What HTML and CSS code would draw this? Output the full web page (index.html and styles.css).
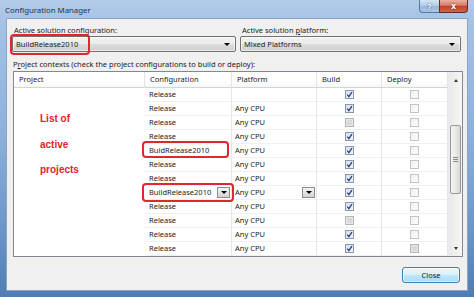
FILE: index.html
```html
<!DOCTYPE html>
<html>
<head>
<meta charset="utf-8">
<link rel="stylesheet" href="styles.css">
</head>
<body>
<div class="window">
  <div class="titlebar">
    <span class="title">Configuration Manager</span>
    <div class="caption">
      <span class="cap-help">?</span>
      <span class="cap-close">x</span>
    </div>
  </div>
  <div class="client">
    <div class="top">
      <div class="field">
        <div class="label">Active solution configuration:</div>
        <div class="combo"><span>BuildRelease2010</span><i class="arrow"></i></div>
      </div>
      <div class="field">
        <div class="label">Active solution <u>p</u>latform:</div>
        <div class="combo"><span>Mixed Platforms</span><i class="arrow"></i></div>
      </div>
    </div>
    <div class="label ctx">P<u>r</u>oject contexts (check the project configurations to build or deploy):</div>
    <div class="list">
      <div class="grid">
        <div class="hd">Project</div>
        <div class="hd">Configuration</div>
        <div class="hd">Platform</div>
        <div class="hd">Build</div>
        <div class="hd">Deploy</div>
        <div class="proj"><p>List of</p><p>active</p><p>projects</p></div>

        <div class="c">Release</div><div class="c plat"></div>
        <div class="c chk"><span class="cb on"><svg viewBox="0 0 9 9"><path d="M2.2 4.6 L3.9 6.6 L6.9 2.1"/></svg></span></div><div class="c chk"><span class="cb"></span></div>

        <div class="c">Release</div><div class="c plat">Any CPU</div>
        <div class="c chk"><span class="cb on"><svg viewBox="0 0 9 9"><path d="M2.2 4.6 L3.9 6.6 L6.9 2.1"/></svg></span></div><div class="c chk"><span class="cb"></span></div>

        <div class="c">Release</div><div class="c plat">Any CPU</div>
        <div class="c chk"><span class="cb dis"></span></div><div class="c chk"><span class="cb"></span></div>

        <div class="c">Release</div><div class="c plat">Any CPU</div>
        <div class="c chk"><span class="cb on"><svg viewBox="0 0 9 9"><path d="M2.2 4.6 L3.9 6.6 L6.9 2.1"/></svg></span></div><div class="c chk"><span class="cb"></span></div>

        <div class="c">BuidRelease2010</div><div class="c plat">Any CPU</div>
        <div class="c chk"><span class="cb on"><svg viewBox="0 0 9 9"><path d="M2.2 4.6 L3.9 6.6 L6.9 2.1"/></svg></span></div><div class="c chk"><span class="cb"></span></div>

        <div class="c">Release</div><div class="c plat">Any CPU</div>
        <div class="c chk"><span class="cb on"><svg viewBox="0 0 9 9"><path d="M2.2 4.6 L3.9 6.6 L6.9 2.1"/></svg></span></div><div class="c chk"><span class="cb"></span></div>

        <div class="c">Release</div><div class="c plat">Any CPU</div>
        <div class="c chk"><span class="cb on"><svg viewBox="0 0 9 9"><path d="M2.2 4.6 L3.9 6.6 L6.9 2.1"/></svg></span></div><div class="c chk"><span class="cb"></span></div>

        <div class="c drop">BuildRelease2010<span class="dbtn"><i class="arrow"></i></span></div><div class="c plat drop">Any CPU<span class="dbtn"><i class="arrow"></i></span></div>
        <div class="c chk"><span class="cb on"><svg viewBox="0 0 9 9"><path d="M2.2 4.6 L3.9 6.6 L6.9 2.1"/></svg></span></div><div class="c chk"><span class="cb"></span></div>

        <div class="c">Release</div><div class="c plat">Any CPU</div>
        <div class="c chk"><span class="cb on"><svg viewBox="0 0 9 9"><path d="M2.2 4.6 L3.9 6.6 L6.9 2.1"/></svg></span></div><div class="c chk"><span class="cb"></span></div>

        <div class="c">Release</div><div class="c plat">Any CPU</div>
        <div class="c chk"><span class="cb dis"></span></div><div class="c chk"><span class="cb"></span></div>

        <div class="c">Release</div><div class="c plat">Any CPU</div>
        <div class="c chk"><span class="cb on"><svg viewBox="0 0 9 9"><path d="M2.2 4.6 L3.9 6.6 L6.9 2.1"/></svg></span></div><div class="c chk"><span class="cb"></span></div>

        <div class="c">Release</div><div class="c plat">Any CPU</div>
        <div class="c chk"><span class="cb on"><svg viewBox="0 0 9 9"><path d="M2.2 4.6 L3.9 6.6 L6.9 2.1"/></svg></span></div><div class="c chk"><span class="cb dis"></span></div>
      </div>
      <div class="vscroll">
        <div class="sbtn"><i class="up"></i></div>
        <div class="track"><div class="thumb"><b></b><b></b><b></b></div></div>
        <div class="sbtn"><i class="down"></i></div>
      </div>
    </div>
    <div class="footer">
      <button class="btn">Close</button>
    </div>
  </div>
  <div class="mark m1"></div>
  <div class="mark m2"></div>
  <div class="mark m3"></div>
</div>
</body>
</html>
```

FILE: styles.css
```css
* { box-sizing: border-box; margin: 0; padding: 0; }
html, body { width: 474px; height: 297px; overflow: hidden; }
body {
  font-family: "Noto Sans", "Open Sans", sans-serif;
  font-size: 7.5px;
  color: #1a1a1a;
}
.window {
  position: relative;
  width: 474px;
  height: 297px;
  display: flex;
  flex-direction: column;
  background: linear-gradient(180deg, #b2cbe8 0%, #a4c2e5 8%, #8db1db 45%, #6993c6 80%, #4f7cb3 100%);
}
.titlebar {
  height: 18px;
  display: flex;
  align-items: flex-start;
  padding: 0 6px 0 5px;
}
.title {
  line-height: 20px;
  font-size: 7.8px;
  color: #1d2f4c;
}
.caption { margin-left: auto; display: flex; }
.cap-help, .cap-close {
  height: 13px;
  display: flex;
  align-items: center;
  justify-content: center;
  color: #fff;
  font-weight: bold;
  font-size: 8px;
  text-shadow: 0 0 2px #1c3050;
}
.cap-help {
  width: 20px;
  border: 1px solid #5676a0;
  border-top: none;
  border-right: none;
  border-radius: 0 0 0 4px;
  background: linear-gradient(180deg, #d6e4f3 0%, #b2cbe8 50%, #97b6dc 51%, #a9c7ea 100%);
}
.cap-close {
  width: 29px;
  border: 1px solid #6e2a20;
  border-top: none;
  border-radius: 0 0 4px 0;
  background: linear-gradient(180deg, #eab0a2 0%, #d87a66 45%, #c2412a 50%, #d1644b 100%);
  font-family: "DejaVu Sans", sans-serif;
  text-shadow: 0 0 2px #5a1a10;
}
.client {
  flex: 1;
  margin: 0 6px 6px;
  background: #f0f0f0;
  border: 1px solid #8ba4c4;
  padding: 6px 6px 0 5px;
  display: flex;
  flex-direction: column;
}
.top {
  display: grid;
  grid-template-columns: 224px 221px;
  column-gap: 4px;
}
.label {
  line-height: 11px;
  height: 11px;
  padding-left: 2px;
  white-space: nowrap;
}
.combo {
  height: 16px;
  border: 1px solid #707070;
  border-radius: 2px;
  background: linear-gradient(180deg, #f2f2f2 0%, #ebebeb 50%, #dddddd 51%, #cfcfcf 100%);
  box-shadow: inset 0 0 0 1px rgba(255,255,255,0.6);
  display: flex;
  align-items: center;
  padding: 0 5px 0 3px;
  line-height: 14px;
}
.combo .arrow { margin-left: auto; }
.arrow {
  display: block;
  width: 0;
  height: 0;
  border-left: 3px solid transparent;
  border-right: 3px solid transparent;
  border-top: 3px solid #000;
}
.ctx { margin-top: 7px; padding-left: 1px; }
.list {
  margin: 1px 0 0 1px;
  width: 450px;
  height: 186px;
  border: 1px solid #828790;
  background: #fff;
  display: flex;
}
.grid {
  width: 434px;
  display: grid;
  grid-template-columns: 131px 87px 85px 65px 66px;
  grid-template-rows: 16px repeat(12, 14px);
}
.hd {
  line-height: 15px;
  padding-left: 5px;
  border-bottom: 1px solid #d5d5d5;
  border-right: 1px solid #e3e3e3;
  background: linear-gradient(180deg, #ffffff 0%, #ffffff 60%, #f6f7f9 100%);
}
.proj {
  grid-column: 1;
  grid-row: 2 / span 12;
  padding: 18px 0 0 26px;
  font-family: "Liberation Sans", Arial, sans-serif;
  font-weight: bold;
  font-size: 10px;
  line-height: 25.5px;
  color: #e3222b;
}
.c {
  line-height: 13px;
  padding-left: 4px;
  border-bottom: 1px solid #f0f0f0;
  border-right: 1px solid #e6e6e6;
  white-space: nowrap;
}
.c.plat { padding-left: 3px; }
.drop {
  display: flex;
  align-items: center;
}
.dbtn {
  margin-left: auto;
  margin-right: 1px;
  width: 13px;
  height: 11px;
  border: 1px solid #8c8c8c;
  background: linear-gradient(180deg, #f4f4f4 0%, #e4e4e4 50%, #d4d4d4 100%);
  display: flex;
  align-items: center;
  justify-content: center;
}
.chk {
  padding: 0;
  display: flex;
  align-items: center;
  justify-content: center;
}
.cb {
  width: 9px;
  height: 9px;
  border: 1px solid #c4c4c4;
  background: linear-gradient(135deg, #f0f0f0 0%, #fdfdfd 100%);
  display: block;
  position: relative;
}
.cb.on {
  border-color: #8a98ab;
  background: linear-gradient(135deg, #d7dfea 0%, #f1f4f8 100%);
}
.cb.dis {
  border-color: #b4b4b4;
  background: #d9d9d9;
  box-shadow: inset 0 0 0 1px #e8e8e8;
}
.cb svg {
  position: absolute;
  left: -1px;
  top: -1px;
  width: 9px;
  height: 9px;
}
.cb svg path {
  fill: none;
  stroke: #27408a;
  stroke-width: 1.3;
}
.vscroll {
  width: 14px;
  display: flex;
  flex-direction: column;
  background: linear-gradient(90deg, #e9e9e9 0%, #f6f6f6 100%);
  border-left: 1px solid #ececec;
}
.sbtn {
  height: 16px;
  display: flex;
  align-items: center;
  justify-content: center;
}
.up, .down {
  display: block;
  width: 0;
  height: 0;
  border-left: 2.5px solid transparent;
  border-right: 2.5px solid transparent;
}
.up { border-bottom: 3px solid #333; }
.down { border-top: 3px solid #333; }
.track { flex: 1; }
.thumb {
  margin: 37px auto 0;
  width: 11px;
  height: 69px;
  border: 1px solid #979797;
  border-radius: 2px;
  background: linear-gradient(90deg, #f5f5f5 0%, #e9e9e9 50%, #d8d8d8 100%);
  display: flex;
  flex-direction: column;
  align-items: center;
  justify-content: center;
  gap: 1px;
}
.thumb b {
  display: block;
  width: 5px;
  height: 1px;
  background: #8a8a8a;
}
.footer {
  display: flex;
  justify-content: flex-end;
  margin-top: 10px;
  padding-right: 1px;
}
.btn {
  width: 58px;
  height: 16px;
  border: 1px solid #3c7fb1;
  border-radius: 3px;
  background: linear-gradient(180deg, #ecf7fd 0%, #d9f0fc 50%, #bee6fd 51%, #a9dbf6 100%);
  box-shadow: inset 0 0 0 1px rgba(255,255,255,0.55);
  font-family: "Noto Sans", "Open Sans", sans-serif;
  font-size: 7.5px;
  color: #1a1a1a;
  line-height: 14px;
}
.mark {
  position: absolute;
  border: 2px solid #e0262f;
  border-radius: 4px;
}
.m1 { left: 10px; top: 34px; width: 80px; height: 21px; }
.m2 { left: 142px; top: 141px; width: 87px; height: 17px; }
.m3 { left: 142px; top: 183px; width: 92px; height: 19px; }
```
